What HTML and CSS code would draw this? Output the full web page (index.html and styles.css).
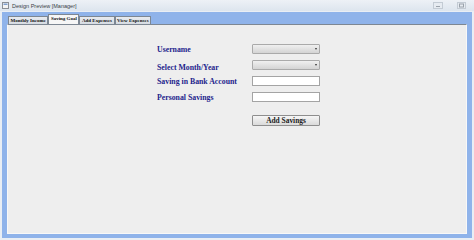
FILE: index.html
```html
<!DOCTYPE html>
<html lang="en">
<head>
    <meta charset="UTF-8">
    <title>Design Preview [Manager]</title>
    <link rel="stylesheet" href="styles.css">
</head>
<body>
    <div class="window">
        <div class="titlebar">
            <svg class="app-icon" width="7" height="7" viewBox="0 0 7 7">
                <rect x="0.5" y="0.5" width="6" height="6" fill="#f4f4f4" stroke="#8a8f96"/>
                <rect x="1.5" y="1.5" width="4" height="1.5" fill="#7e9fcf"/>
            </svg>
            <span class="title">Design Preview [Manager]</span>
            <div class="controls">
                <svg width="10" height="7" viewBox="0 0 10 7">
                    <rect x="0.5" y="0.5" width="9" height="6" fill="#e6ebf1" stroke="#c3cbd4"/>
                    <rect x="3" y="4" width="4" height="1" fill="#9aa2ab"/>
                </svg>
                <svg width="9" height="7" viewBox="0 0 9 7">
                    <rect x="0.5" y="0.5" width="8" height="6" fill="#e6ebf1" stroke="#c3cbd4"/>
                    <rect x="2.5" y="2" width="4" height="3" fill="none" stroke="#9aa2ab"/>
                </svg>
            </div>
        </div>

        <div class="frame">
            <div class="tabs">
                <div class="tab">Monthly Income</div>
                <div class="tab active">Saving Goal</div>
                <div class="tab">Add Expenses</div>
                <div class="tab">View Expenses</div>
            </div>
            <div class="panel">
                <div class="form">
                    <label class="lbl">Username</label>
                    <div class="combo"><span class="arrow"></span></div>

                    <label class="lbl lower">Select Month/Year</label>
                    <div class="combo"><span class="arrow"></span></div>

                    <label class="lbl">Saving in Bank Account</label>
                    <div class="field"></div>

                    <label class="lbl">Personal Savings</label>
                    <div class="field"></div>

                    <div></div>
                    <button class="btn">Add Savings</button>
                </div>
            </div>
        </div>
    </div>
</body>
</html>
```

FILE: styles.css
```css
* {
    margin: 0;
    padding: 0;
    box-sizing: border-box;
}

body {
    width: 474px;
    height: 240px;
    overflow: hidden;
    background-color: #e9eef4;
    font-family: "Liberation Serif", serif;
}

.window {
    width: 474px;
    height: 240px;
    display: flex;
    flex-direction: column;
}

.titlebar {
    height: 11px;
    display: flex;
    align-items: center;
    padding: 0 2px;
    background: linear-gradient(#edf1f6, #dde5ee);
}

.app-icon {
    margin-right: 3px;
}

.title {
    font-family: "Liberation Sans", sans-serif;
    font-size: 5.5px;
    color: #3a3f46;
}

.controls {
    margin-left: auto;
    display: flex;
    gap: 14px;
    padding-right: 6px;
}

.frame {
    flex: 1;
    margin: 1px 2px 2px;
    background-color: #8fb3ea;
    padding: 3px 5px 4px;
    display: flex;
    flex-direction: column;
}

.tabs {
    display: flex;
    align-items: flex-end;
    height: 9px;
    padding-left: 1px;
}

.tab {
    height: 8px;
    padding: 0 1.5px;
    font-size: 5px;
    font-weight: bold;
    line-height: 7px;
    color: #111;
    background: linear-gradient(#e8ebef, #d6dbe2);
    border: 1px solid #7d8793;
    border-bottom: none;
}

.tab.active {
    height: 10px;
    background: #f6f6f6;
    line-height: 8px;
}

.panel {
    flex: 1;
    background-color: #eeeeee;
    border: 1px solid #f8f8f8;
    border-top-color: #7d8793;
    padding: 19px 0 0 149px;
}

.form {
    display: grid;
    grid-template-columns: 95px 68px;
    grid-template-rows: 10px 10px 10px 10px 11px;
    row-gap: 6px;
}

.lbl {
    align-self: center;
    font-size: 7.8px;
    font-weight: bold;
    color: #23238c;
    white-space: nowrap;
}

.lbl.lower {
    align-self: end;
    margin-bottom: -2px;
}

.combo {
    position: relative;
    border: 1px solid #aaaaaa;
    border-radius: 1px;
    background: linear-gradient(#f0f0f0, #d4d4d4);
}

.arrow {
    position: absolute;
    right: 2px;
    top: 3px;
    border-left: 1.5px solid transparent;
    border-right: 1.5px solid transparent;
    border-top: 2px solid #333;
}

.field {
    background-color: #ffffff;
    border: 1px solid #a4a4a4;
}

.btn {
    margin-top: 7px;
    height: 11px;
    font-family: "Liberation Serif", serif;
    font-size: 7.4px;
    font-weight: bold;
    color: #222;
    background: linear-gradient(#f6f6f6, #dadada);
    border: 1px solid #8e8e8e;
    border-radius: 1px;
}
```
